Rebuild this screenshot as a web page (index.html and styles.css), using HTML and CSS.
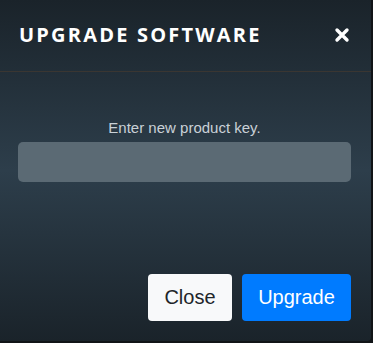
FILE: index.html
```html
<!DOCTYPE html>
<html lang="en">
<head>
  <meta charset="UTF-8">
  <title>Upgrade Software</title>
  <link rel="stylesheet" href="styles.css">
</head>
<body>
  <div class="modal">
    <div class="modal-header">
      <h2 class="modal-title">UPGRADE SOFTWARE</h2>
      <button class="close-x" aria-label="Close">
        <svg width="16" height="16" viewBox="0 0 16 16">
          <path d="M3 3 L13 13 M13 3 L3 13" stroke="#fff" stroke-width="3.4" stroke-linecap="round"/>
        </svg>
      </button>
    </div>
    <div class="modal-body">
      <label class="key-label" for="key">Enter new product key.</label>
      <input id="key" class="key-input" type="text">
    </div>
    <div class="modal-footer">
      <button class="btn btn-light">Close</button>
      <button class="btn btn-primary">Upgrade</button>
    </div>
  </div>
</body>
</html>
```

FILE: styles.css
```css
body {
  margin: 0;
  background-color: #111417;
  font-family: 'Liberation Sans', Arial, sans-serif;
}

.modal {
  width: 371px;
  height: 341px;
  box-sizing: border-box;
  display: flex;
  flex-direction: column;
  background: linear-gradient(to bottom, #1a232a 0%, #2d3e4b 50%, #1a232a 100%);
  border-bottom-right-radius: 4px;
}

.modal-header {
  height: 72px;
  box-sizing: border-box;
  display: flex;
  align-items: center;
  justify-content: space-between;
  padding: 0 21px 2px 19px;
  border-bottom: 1px solid #3a3632;
}

.modal-title {
  margin: 0;
  font-family: 'Open Sans', sans-serif;
  font-weight: 700;
  font-size: 20px;
  letter-spacing: 2.2px;
  color: #ffffff;
}

.close-x {
  background: none;
  border: none;
  padding: 0;
  width: 16px;
  height: 16px;
  display: flex;
  cursor: pointer;
}

.modal-body {
  display: flex;
  flex-direction: column;
  align-items: center;
  padding: 47px 20px 0 18px;
}

.key-label {
  font-size: 15px;
  color: #c9d1d7;
  margin-bottom: 6px;
}

.key-input {
  width: 100%;
  height: 40px;
  box-sizing: border-box;
  border: none;
  border-radius: 5px;
  background-color: #5b6a74;
}

.modal-footer {
  margin-top: auto;
  display: flex;
  justify-content: flex-end;
  gap: 10px;
  padding: 0 20px 20px 0;
}

.btn {
  height: 47px;
  border: none;
  border-radius: 4px;
  font-family: 'Liberation Sans', Arial, sans-serif;
  font-size: 20px;
  padding: 0;
  cursor: pointer;
}

.btn-light {
  background-color: #f8f9fa;
  color: #212529;
  width: 84px;
}

.btn-primary {
  background-color: #007bff;
  color: #ffffff;
  width: 109px;
}
```
